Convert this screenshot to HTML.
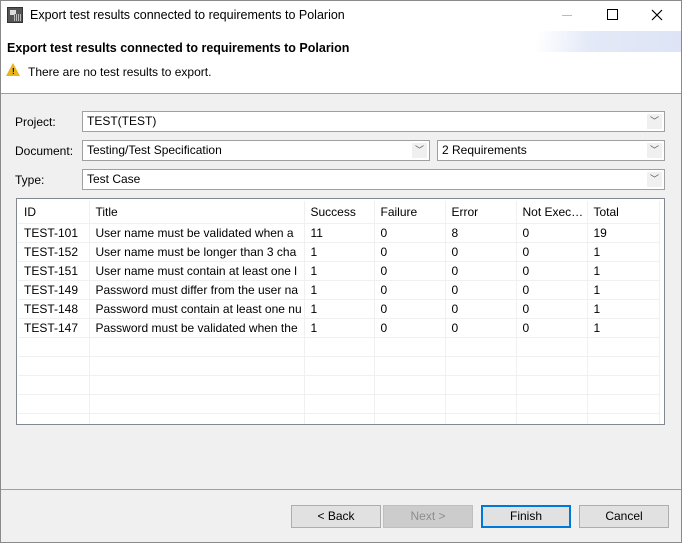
<!DOCTYPE html><html><head><style>
*{box-sizing:border-box;margin:0;padding:0}
body{width:682px;height:543px;overflow:hidden;font-family:"Liberation Sans","Noto Sans CJK KR",sans-serif;font-size:12px;color:#000;background:#f0f0f0;position:relative}
.a{position:absolute}
.combo{position:absolute;height:21px;background:#fff;border:1px solid #a0a0a0;padding:2px 4px;font-size:12px}
.combo .dd{position:absolute;right:2px;top:2px;width:15px;height:15px;background:#f0f0f0;color:#555;font-size:9px;text-align:center;line-height:15px}
.btn{position:absolute;top:505px;height:23px;width:90px;background:#e1e1e1;border:1px solid #adadad;text-align:center;line-height:21px;font-size:12px}
td{height:19px;padding:0 6px;white-space:nowrap;overflow:hidden;border-right:1px solid #f0f0f0;border-bottom:1px solid #f0f0f0}
table{border-collapse:collapse;table-layout:fixed}
</style></head><body>
<div class="a" style="left:0;top:0;width:682px;height:94px;background:#fff;border-bottom:1px solid #a0a0a0"></div>
<div class="a" style="left:530px;top:31px;width:152px;height:21px;background:linear-gradient(100deg,rgba(255,255,255,1) 5%,#e3e9f7 40%,#dde4f5)"></div>
<div class="a" style="left:7px;top:7px;width:16px;height:16px;background:#555;border:1px solid #333"><div style="position:absolute;left:2px;top:2px;width:6px;height:5px;background:#ddd"></div><div style="position:absolute;right:1px;bottom:1px;width:7px;height:7px;background:repeating-linear-gradient(90deg,#bbb 0 1px,#555 1px 2px)"></div></div>
<div class="a" style="left:30px;top:8px;font-size:12.5px">Export test results connected to requirements to Polarion</div>
<div class="a" style="left:562px;top:15px;width:10px;height:1px;background:#bbb"></div>
<div class="a" style="left:607px;top:9px;width:11px;height:11px;border:1px solid #000"></div>
<svg class="a" style="left:651px;top:9px" width="12" height="12"><path d="M1 1L11 11M11 1L1 11" stroke="#000" stroke-width="1.2"/></svg>
<div class="a" style="left:7px;top:41px;font-weight:bold;font-size:12.5px">Export test results connected to requirements to Polarion</div>
<div class="a" style="left:6px;top:63px;width:0;height:0;border-left:7px solid transparent;border-right:7px solid transparent;border-bottom:13px solid #e8b31c"></div>
<div class="a" style="left:12px;top:67px;font-size:8px;font-weight:bold">!</div>
<div class="a" style="left:28px;top:65px">There are no test results to export.</div>
<div class="a" style="left:15px;top:115px">Project:</div>
<div class="a" style="left:15px;top:144px">Document:</div>
<div class="a" style="left:15px;top:173px">Type:</div>
<div class="combo" style="left:82px;top:111px;width:583px">TEST(TEST)<div class="dd">﹀</div></div>
<div class="combo" style="left:82px;top:140px;width:348px">Testing/Test Specification<div class="dd">﹀</div></div>
<div class="combo" style="left:437px;top:140px;width:228px">2 Requirements<div class="dd">﹀</div></div>
<div class="combo" style="left:82px;top:169px;width:583px">Test Case<div class="dd">﹀</div></div>
<div class="a" style="left:16px;top:198px;width:649px;height:227px;background:#fff;border:1px solid #828790;overflow:hidden;padding:2px 0 0 1px">
<table style="width:641px"><colgroup><col style="width:71px"><col style="width:215px"><col style="width:70px"><col style="width:71px"><col style="width:71px"><col style="width:71px"><col style="width:72px"></colgroup>
<tr><td style="height:22px">ID</td><td>Title</td><td>Success</td><td>Failure</td><td>Error</td><td>Not Exec…</td><td>Total</td></tr>
<tr><td>TEST-101</td><td>User name must be validated when a</td><td>11</td><td>0</td><td>8</td><td>0</td><td>19</td></tr>
<tr><td>TEST-152</td><td>User name must be longer than 3 cha</td><td>1</td><td>0</td><td>0</td><td>0</td><td>1</td></tr>
<tr><td>TEST-151</td><td>User name must contain at least one l</td><td>1</td><td>0</td><td>0</td><td>0</td><td>1</td></tr>
<tr><td>TEST-149</td><td>Password must differ from the user na</td><td>1</td><td>0</td><td>0</td><td>0</td><td>1</td></tr>
<tr><td>TEST-148</td><td>Password must contain at least one nu</td><td>1</td><td>0</td><td>0</td><td>0</td><td>1</td></tr>
<tr><td>TEST-147</td><td>Password must be validated when the</td><td>1</td><td>0</td><td>0</td><td>0</td><td>1</td></tr>
<tr><td></td><td></td><td></td><td></td><td></td><td></td><td></td></tr>
<tr><td></td><td></td><td></td><td></td><td></td><td></td><td></td></tr>
<tr><td></td><td></td><td></td><td></td><td></td><td></td><td></td></tr>
<tr><td></td><td></td><td></td><td></td><td></td><td></td><td></td></tr>
<tr><td></td><td></td><td></td><td></td><td></td><td></td><td></td></tr>
</table></div>
<div class="a" style="left:0;top:489px;width:682px;height:1px;background:#a0a0a0"></div>
<div class="btn" style="left:291px">&lt; Back</div>
<div class="btn" style="left:383px;background:#cccccc;border-color:#bfbfbf;color:#8d8d8d">Next &gt;</div>
<div class="btn" style="left:481px;border:2px solid #0078d7;line-height:19px">Finish</div>
<div class="btn" style="left:579px">Cancel</div>
<div class="a" style="left:0;top:0;width:682px;height:543px;border:1px solid #8a8a8a"></div>
</body></html>
